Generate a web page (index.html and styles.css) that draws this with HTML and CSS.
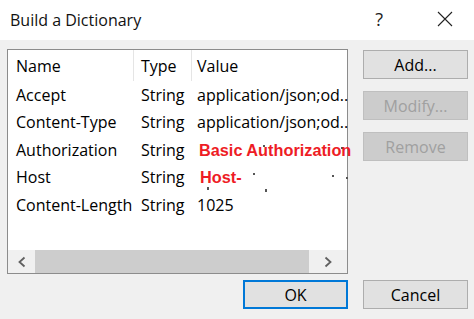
FILE: index.html
```html
<!DOCTYPE html>
<html>
<head>
<meta charset="utf-8">
<link rel="stylesheet" href="styles.css">
</head>
<body>
<div class="dialog">
  <div class="titlebar">
    <span class="title">Build a Dictionary</span>
    <span class="help">?</span>
    <svg class="close" width="16" height="16" viewBox="0 0 16 16"><path d="M1 1 L15 15 M15 1 L1 15" stroke="#222" stroke-width="1.1" fill="none"/></svg>
  </div>
  <div class="main">
    <div class="listbox">
      <div class="table">
        <div class="row head">
          <div class="c name">Name</div>
          <div class="c type">Type</div>
          <div class="c value">Value</div>
        </div>
        <div class="row"><div class="c name">Accept</div><div class="c type">String</div><div class="c value">application/json;od..</div></div>
        <div class="row"><div class="c name">Content-Type</div><div class="c type">String</div><div class="c value">application/json;od..</div></div>
        <div class="row"><div class="c name">Authorization</div><div class="c type">String</div><div class="c value red">Basic Authorization</div></div>
        <div class="row"><div class="c name">Host</div><div class="c type">String</div><div class="c value red host">Host-</div></div>
        <div class="row"><div class="c name">Content-Length</div><div class="c type">String</div><div class="c value">1025</div></div>
      </div>
      <span class="dot d1"></span><span class="dot d2"></span><span class="dot d3"></span><span class="dot d4"></span><span class="dot d5"></span><span class="dot d6"></span><span class="dot d7"></span>
      <div class="hscroll">
        <div class="arrow"><svg width="10" height="12" viewBox="0 0 10 12"><polyline points="7.5,1.5 2.5,6 7.5,10.5" fill="none" stroke="#606060" stroke-width="1.8"/></svg></div>
        <div class="thumb"></div>
        <div class="arrow right"><svg width="10" height="12" viewBox="0 0 10 12"><polyline points="2.5,1.5 7.5,6 2.5,10.5" fill="none" stroke="#606060" stroke-width="1.8"/></svg></div>
      </div>
    </div>
    <div class="side">
      <button class="btn">Add...</button>
      <button class="btn disabled">Modify...</button>
      <button class="btn disabled">Remove</button>
    </div>
  </div>
  <div class="footer">
    <button class="btn default">OK</button>
    <button class="btn">Cancel</button>
  </div>
</div>
</body>
</html>
```
FILE: styles.css
```css
html, body {
  margin: 0;
  padding: 0;
}
body {
  width: 474px;
  height: 319px;
  overflow: hidden;
  background: #f0f0f0;
  font-family: "Open Sans", "Noto Sans", sans-serif;
  color: #000;
}
.dialog {
  width: 474px;
  height: 319px;
  display: flex;
  flex-direction: column;
}
.titlebar {
  height: 40px;
  background: #fff;
  display: flex;
  align-items: center;
  flex-shrink: 0;
}
.title {
  font-size: 16px;
  margin-left: 10px;
  margin-top: -1px;
  flex: 1;
  color: #111;
}
.help {
  font-size: 18px;
  color: #222;
  margin-right: 54px;
  margin-top: -2px;
}
.close {
  margin-right: 21px;
  margin-top: -2px;
}
.main {
  display: flex;
  padding: 9px 6px 0 7px;
  gap: 15px;
}
.listbox {
  position: relative;
  width: 339px;
  height: 223px;
  border: 1px solid #8c8c8c;
  background: #fff;
  display: flex;
  flex-direction: column;
}
.table {
  flex: 1;
  font-size: 16px;
  overflow: visible;
}
.row {
  display: flex;
  height: 27.5px;
  align-items: center;
  white-space: nowrap;
}
.row.head {
  height: 31px;
}
.c {
  box-sizing: border-box;
  height: 100%;
  display: flex;
  align-items: center;
}
.name {
  width: 126px;
  flex-shrink: 0;
  padding-left: 8px;
}
.type {
  width: 58px;
  flex-shrink: 0;
  padding-left: 7px;
}
.value {
  padding-left: 5px;
  flex-shrink: 0;
  overflow: visible;
}
.head .name, .head .type {
  border-right: 1px solid #e5e5e5;
}
.red {
  position: relative;
  z-index: 1;
  color: #ee1c25;
  font-family: "Liberation Sans", Arial, sans-serif;
  font-weight: bold;
  font-size: 16.3px;
  padding-left: 7px;
  padding-top: 2px;
}
.host {
  padding-left: 8px;
  padding-top: 0;
}
.dot {
  position: absolute;
  width: 2px;
  height: 2px;
  background: #555;
}
.d1 { left: 255px; top: 95px; }
.d2 { left: 333px; top: 97px; }
.d3 { left: 245px; top: 123px; }
.d4 { left: 324px; top: 125px; }
.d5 { left: 338px; top: 127px; }
.d6 { left: 199px; top: 137px; height: 3px; }
.d7 { left: 257px; top: 139px; height: 3px; }
.hscroll {
  height: 23px;
  display: flex;
  background: #f0f0f0;
}
.arrow {
  width: 27px;
  display: flex;
  align-items: center;
  justify-content: center;
}
.arrow.right {
  width: 38px;
}
.thumb {
  flex: 1;
  background: #cdcdcd;
}
.side {
  display: flex;
  flex-direction: column;
  gap: 12px;
  padding-top: 1px;
}
.btn {
  box-sizing: border-box;
  width: 105px;
  height: 29px;
  background: #e1e1e1;
  border: 1px solid #adadad;
  font-family: "Open Sans", "Noto Sans", sans-serif;
  font-size: 16px;
  color: #000;
  padding: 0;
  margin: 0;
}
.btn.disabled {
  background: #cccccc;
  border-color: #bfbfbf;
  color: #a0a0a0;
}
.btn.default {
  border: 2px solid #0078d7;
}
.footer {
  display: flex;
  justify-content: flex-end;
  gap: 15px;
  padding: 6px 6px 0 0;
}
```
